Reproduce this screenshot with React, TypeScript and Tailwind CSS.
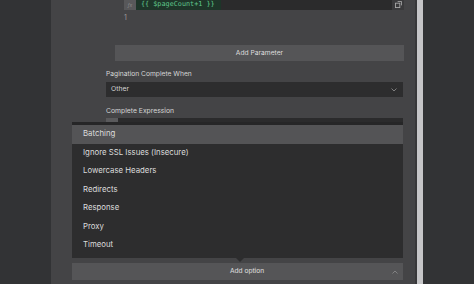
import React from "react";

const font = { fontFamily: "Inter, 'Noto Sans', sans-serif" };

export default function App() {
  const items = [
    "Batching",
    "Ignore SSL Issues (Insecure)",
    "Lowercase Headers",
    "Redirects",
    "Response",
    "Proxy",
    "Timeout",
  ];
  return (
    <div
      className="w-[474px] h-[284px] overflow-hidden flex bg-[#323335] text-[#dcdcdc]"
      style={font}
    >
      <div className="w-[51px] shrink-0" />
      <div className="w-[364px] shrink-0 bg-[#444446] relative flex flex-col">
        {/* code input */}
        <div className="ml-[73px] mr-[11px] mt-[-4px] h-[14px] flex bg-[#2b2b2c]">
          <div className="w-[12px] bg-[#58585a] flex items-end justify-center pb-[1px] text-[5px] text-[#8a8a8a] italic">
            fx
          </div>
          <div className="flex-1 flex items-end">
            <div className="bg-[#1e3529] h-full flex items-end pl-[5px] pr-[6px] pb-[1px]">
              <span
                className="text-[6.8px] leading-[9px] text-[#5fc48a]"
                style={{ fontFamily: "'DejaVu Sans Mono', monospace" }}
              >
                {"{{ $pageCount+1 }}"}
              </span>
            </div>
          </div>
          <div className="w-[12px] bg-[#3a3a3c] flex items-end justify-center pb-[2px]">
            <svg width="7" height="7" viewBox="0 0 8 8">
              <rect x="0.5" y="2.5" width="5" height="5" fill="none" stroke="#aaa" strokeWidth="1" />
              <path d="M3 0.5h4.5v4.5" fill="none" stroke="#aaa" strokeWidth="1" />
            </svg>
          </div>
        </div>
        <div className="ml-[73px] mt-[4px] text-[7px] leading-[8px] text-[#9a9a9a]">1</div>

        <div className="ml-[64px] mr-[11px] mt-[23px] h-[16px] bg-[#555557] flex items-center justify-center text-[6.7px] text-[#dedede]">
          Add Parameter
        </div>

        <div className="ml-[55px] mt-[8px] text-[6.7px] leading-[10px] text-[#d6d6d6]">
          Pagination Complete When
        </div>
        <div className="ml-[55px] mr-[12px] mt-[3px] h-[15px] bg-[#2d2d2e] flex items-center justify-between pl-[5px] pr-[6px]">
          <span className="text-[6.8px] text-[#d6d6d6]">Other</span>
          <svg width="6" height="4" viewBox="0 0 6 4">
            <path d="M0.5 0.5L3 3L5.5 0.5" fill="none" stroke="#888" strokeWidth="0.9" />
          </svg>
        </div>

        <div className="ml-[55px] mt-[9px] text-[6.8px] leading-[10px] text-[#d6d6d6]">
          Complete Expression
        </div>
        <div className="ml-[55px] mr-[12px] mt-[2px] h-[4px] bg-[#2b2b2c] flex">
          <div className="w-[12px] bg-[#5a5a5c]" />
        </div>

        <div className="flex-1" />

        <div className="ml-[21px] mr-[12px] mb-[4px] h-[17px] bg-[#555557] flex items-center relative">
          <span className="flex-1 text-center pl-[19px] text-[6.6px] text-[#e0e0e0]">Add option</span>
          <svg className="absolute right-[5px]" width="6" height="4" viewBox="0 0 6 4">
            <path d="M0.5 3.5L3 1L5.5 3.5" fill="none" stroke="#888" strokeWidth="0.9" />
          </svg>
        </div>

        {/* dropdown menu */}
        <div className="absolute left-[21px] top-[122px] w-[331px] h-[136px] bg-[#2d2d2e] border-t-[3px] border-[#262627] flex flex-col">
          {items.map((it, i) => (
            <div
              key={it}
              className={`h-[18.5px] shrink-0 flex items-center pl-[11px] text-[7.8px] text-[#dcdcdc] ${
                i === 0 ? "bg-[#545456]" : ""
              }`}
            >
              {it}
            </div>
          ))}
          <div className="absolute left-[164px] bottom-[-4px] w-0 h-0 border-l-[4px] border-r-[4px] border-t-[4px] border-l-transparent border-r-transparent border-t-[#2d2d2e]" />
        </div>
      </div>
      <div className="w-[2px] bg-[#38383a] shrink-0" />
      <div className="w-[6px] bg-[#c6c6c8] shrink-0" />
      <div className="flex-1 bg-[#323335]" />
    </div>
  );
}
